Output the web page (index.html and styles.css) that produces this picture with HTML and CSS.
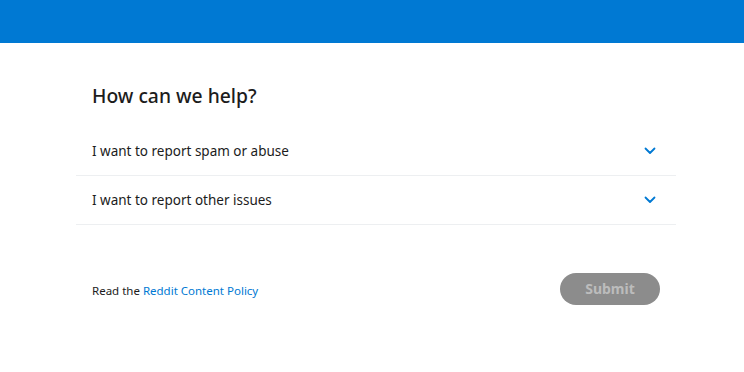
FILE: index.html
```html
<!DOCTYPE html>
<html lang="en">
<head>
<meta charset="utf-8">
<title>How can we help?</title>
<link rel="stylesheet" href="styles.css">
</head>
<body>
<header class="topbar"></header>
<main class="panel">
  <h1 class="title">How can we help?</h1>
  <div class="options">
    <div class="option">
      <span class="option-label">I want to report spam or abuse</span>
      <svg class="chevron" width="12" height="8" viewBox="0 0 12 8"><path d="M1.5 1.5 L6 6 L10.5 1.5" fill="none" stroke="#0079d3" stroke-width="1.8" stroke-linecap="round" stroke-linejoin="round"/></svg>
    </div>
    <div class="option">
      <span class="option-label">I want to report other issues</span>
      <svg class="chevron" width="12" height="8" viewBox="0 0 12 8"><path d="M1.5 1.5 L6 6 L10.5 1.5" fill="none" stroke="#0079d3" stroke-width="1.8" stroke-linecap="round" stroke-linejoin="round"/></svg>
    </div>
  </div>
  <div class="footer">
    <p class="policy">Read the <a class="policy-link" href="#">Reddit Content Policy</a></p>
    <button class="submit" disabled>Submit</button>
  </div>
</main>
</body>
</html>
```
FILE: styles.css
```css
html, body {
  margin: 0;
  padding: 0;
  background: #ffffff;
  font-family: "Noto Sans", "Open Sans", sans-serif;
  color: #1c1c1c;
}
.topbar {
  height: 43px;
  background: #0079d3;
}
.panel {
  width: 600px;
  margin-left: 76px;
  padding-top: 40px;
}
.title {
  margin: 0 0 19px 0;
  padding: 0 16px;
  font-size: 19.3px;
  line-height: 25px;
  font-weight: 500;
  color: #1c1c1c;
}
.option {
  display: flex;
  align-items: center;
  justify-content: space-between;
  height: 48px;
  padding: 0 20px 0 16px;
  border-bottom: 1px solid #edeff1;
}
.option-label {
  font-size: 13.5px;
  line-height: 20px;
  color: #1c1c1c;
}
.chevron {
  display: block;
}
.footer {
  display: flex;
  align-items: center;
  justify-content: space-between;
  margin-top: 48px;
  padding: 0 16px;
}
.policy {
  margin: 0;
  font-size: 11.5px;
  line-height: 16px;
  padding-top: 4px;
  color: #1c1c1c;
}
.policy-link {
  color: #0079d3;
  text-decoration: none;
}
.submit {
  width: 100px;
  height: 32px;
  border: none;
  border-radius: 16px;
  background: #8c8c8c;
  color: #bcbcbc;
  font-family: "Noto Sans", "Open Sans", sans-serif;
  font-size: 14px;
  font-weight: 700;
  padding: 0 0 1px 0;
}
```
